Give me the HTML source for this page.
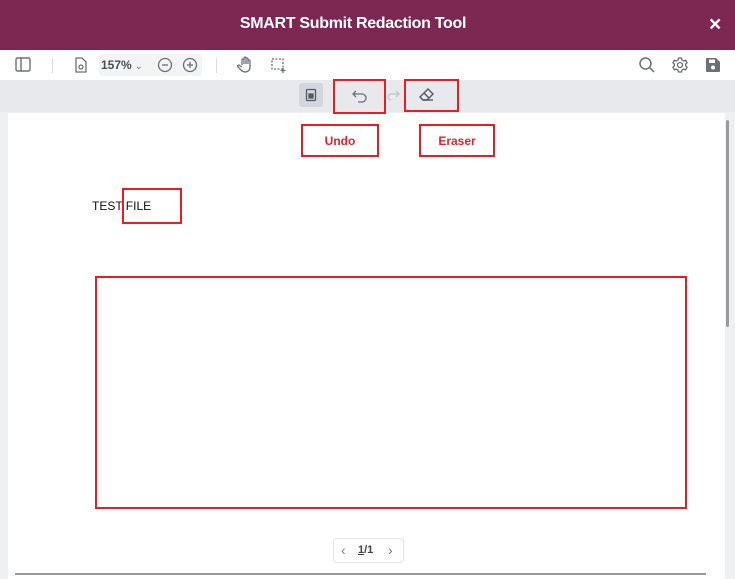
<!DOCTYPE html>
<html><head><meta charset="utf-8"><style>
*{margin:0;padding:0;box-sizing:border-box}
body{width:735px;height:579px;overflow:hidden;background:#eff0f2;font-family:"Liberation Sans",sans-serif;position:relative}
.a{position:absolute}
.hdr{left:0;top:0;width:735px;height:50px;background:#7d2853;color:#fff}
.tb{left:0;top:50px;width:735px;height:30px;background:#fff}
.sb{left:0;top:80px;width:735px;height:32px;background:#e7e9ec}
.pg{left:8px;top:113px;width:717px;height:466px;background:#fff}
.red{border:2px solid #ec1c24}
.lbl{color:#e8202a;font-weight:bold;font-size:12px;display:flex;align-items:center;justify-content:center}
svg{position:absolute}
</style></head><body>
<div class="a hdr">
 <div class="a" style="left:0;width:706px;top:15px;text-align:center;font-weight:bold;font-size:16px;letter-spacing:-0.3px">SMART Submit Redaction Tool</div>
 <div class="a" style="left:709px;top:13px;font-weight:bold;font-size:21px">×</div>
</div>
<div class="a tb">
 <svg style="left:14px;top:6px" width="18" height="18" viewBox="0 0 18 18" fill="none" stroke="#6b7078" stroke-width="1.4"><rect x="2" y="2" width="14" height="13" rx="1.5"/><line x1="7" y1="2" x2="7" y2="15"/></svg>
 <div class="a" style="left:52px;top:8px;width:1px;height:15px;background:#d8dadd"></div>
 <svg style="left:73px;top:6px" width="16" height="18" viewBox="0 0 16 18" fill="none" stroke="#6b7078" stroke-width="1.3"><path d="M3 2h6l4 4v10H3z"/><circle cx="8" cy="11" r="2"/></svg>
 <div class="a" style="left:99px;top:4px;width:103px;height:22px;background:#f3f4f5;border-radius:3px"></div>
 <div class="a" style="left:101px;top:8px;font-size:12px;font-weight:bold;color:#4a4e55">157%<span style="font-weight:normal;font-size:10px;color:#777"> ⌄</span></div>
 <svg style="left:156px;top:6px" width="18" height="18" viewBox="0 0 18 18" fill="none" stroke="#6b7078" stroke-width="1.3"><circle cx="9" cy="9" r="6.5"/><line x1="6" y1="9" x2="12" y2="9"/></svg>
 <svg style="left:181px;top:6px" width="18" height="18" viewBox="0 0 18 18" fill="none" stroke="#6b7078" stroke-width="1.3"><circle cx="9" cy="9" r="6.5"/><line x1="6" y1="9" x2="12" y2="9"/><line x1="9" y1="6" x2="9" y2="12"/></svg>
 <div class="a" style="left:216px;top:8px;width:1px;height:15px;background:#d8dadd"></div>
 <svg style="left:237px;top:5px" width="18" height="19" viewBox="0 0 18 19" fill="none" stroke="#6b7078" stroke-width="1.3"><path d="M5 10V5a1 1 0 012 0v4V3a1 1 0 012 0v6V4a1 1 0 012 0v5V6a1 1 0 012 0v6c0 3-2 5-5 5-2 0-3-1-4-2l-3-3a1 1 0 011.5-1.5L5 12"/></svg>
 <svg style="left:269px;top:6px" width="18" height="18" viewBox="0 0 18 18" fill="none" stroke="#6b7078" stroke-width="1.3" stroke-dasharray="2 1.5"><rect x="3" y="3" width="11" height="10"/><path d="M14 12v5M11.5 14.5h5" stroke-dasharray="none"/></svg>
 <svg style="left:638px;top:6px" width="18" height="18" viewBox="0 0 18 18" fill="none" stroke="#6b7078" stroke-width="1.5"><circle cx="7.5" cy="7.5" r="5.5"/><line x1="11.5" y1="11.5" x2="16" y2="16"/></svg>
 <svg style="left:671px;top:6px" width="18" height="18" viewBox="0 0 18 18" fill="none" stroke="#6b7078" stroke-width="1.3"><path d="M7.5 2h3l.5 2 1.6.9 2-.7 1.5 2.6-1.5 1.4v1.6l1.5 1.4-1.5 2.6-2-.7-1.6.9-.5 2h-3l-.5-2-1.6-.9-2 .7-1.5-2.6 1.5-1.4V8.2L1.9 6.8l1.5-2.6 2 .7L7 4z"/><circle cx="9" cy="9" r="2.5"/></svg>
 <svg style="left:705px;top:7px" width="16" height="16" viewBox="0 0 16 16"><path d="M1 2a1 1 0 011-1h9l4 4v9a1 1 0 01-1 1H2a1 1 0 01-1-1z" fill="#6b7078"/><rect x="4" y="2.5" width="6" height="3.5" fill="#fff"/><circle cx="8" cy="10.5" r="2" fill="#fff"/></svg>
</div>
<div class="a sb">
 <div class="a" style="left:299px;top:3px;width:24px;height:24px;background:#d3d7dd;border-radius:3px"></div>
 <svg style="left:304px;top:8px" width="14" height="14" viewBox="0 0 14 14" fill="none" stroke="#555a62" stroke-width="1.3"><rect x="2.5" y="1.5" width="9" height="11" rx="1"/><rect x="5" y="6" width="4" height="4" fill="#555a62"/></svg>
 <svg style="left:351px;top:8px" width="18" height="16" viewBox="0 0 18 16" fill="none" stroke="#6b7078" stroke-width="1.3"><path d="M5 3L2 6l3 3M2 6h9a4 4 0 010 8H7"/></svg>
 <svg style="left:386px;top:9px" width="14" height="12" viewBox="0 0 14 12" fill="none" stroke="#c0c3c8" stroke-width="1.2"><path d="M10 2l3 3-3 3M13 5H5a3 3 0 000 6"/></svg>
 <svg style="left:418px;top:7px" width="18" height="16" viewBox="0 0 18 16" fill="none" stroke="#555a62" stroke-width="1.4"><path d="M10 2l5 5-6 6H5L2 10z"/><line x1="6" y1="6" x2="11" y2="11"/><line x1="5" y1="13" x2="15" y2="13"/></svg>
</div>
<div class="a pg"></div>
<div class="a" style="left:726px;top:120px;width:3px;height:207px;background:#9a9a9a;border-radius:2px"></div>
<div class="a" style="left:92px;top:199px;font-size:12px;color:#111">TEST FILE</div>
<div class="a" style="left:15px;top:573px;width:691px;height:2px;background:#999"></div>
<div class="a" style="left:333px;top:538px;width:71px;height:25px;border:1px solid #e2e4e7;border-radius:4px;background:#fff;font-size:11px;color:#444;font-weight:bold">
 <span class="a" style="left:7px;top:3px;color:#777;font-weight:normal;font-size:14px">‹</span>
 <span class="a" style="left:24px;top:5px"><u>1</u>/1</span>
 <span class="a" style="left:54px;top:3px;color:#777;font-weight:normal;font-size:14px">›</span>
</div>
<div class="a red" style="left:333px;top:79px;width:53px;height:35px"></div>
<div class="a red" style="left:404px;top:79px;width:55px;height:33px"></div>
<div class="a red lbl" style="left:301px;top:124px;width:78px;height:33px">Undo</div>
<div class="a red lbl" style="left:419px;top:124px;width:76px;height:33px">Eraser</div>
<div class="a red" style="left:122px;top:188px;width:60px;height:36px"></div>
<div class="a red" style="left:95px;top:276px;width:592px;height:233px"></div>
</body></html>
